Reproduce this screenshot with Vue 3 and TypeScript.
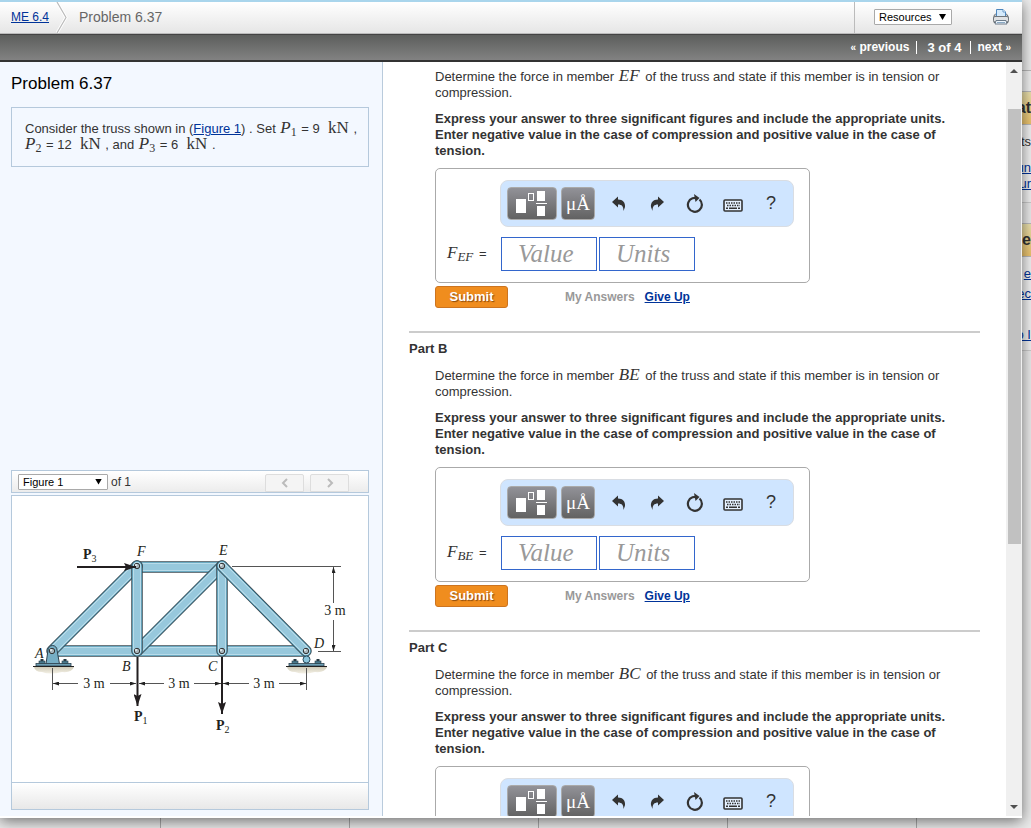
<script setup lang="ts">
import { ref } from 'vue'

interface Part {
  id: string
  title: string
  member: string
}

interface Member {
  x1: number
  y1: number
  x2: number
  y2: number
  cap: 'butt' | 'round'
}

const parts: Part[] = [
  { id: 'a', title: '', member: 'EF' },
  { id: 'b', title: 'Part B', member: 'BE' },
  { id: 'c', title: 'Part C', member: 'BC' },
]

const members: Member[] = [
  { x1: 52, y1: 651, x2: 306, y2: 651, cap: 'butt' },
  { x1: 137, y1: 567, x2: 222, y2: 567, cap: 'butt' },
  { x1: 52, y1: 651, x2: 137, y2: 566, cap: 'round' },
  { x1: 137, y1: 651, x2: 222, y2: 566, cap: 'butt' },
  { x1: 137, y1: 566, x2: 137, y2: 651, cap: 'round' },
  { x1: 222, y1: 566, x2: 222, y2: 651, cap: 'round' },
  { x1: 222, y1: 566, x2: 306, y2: 651, cap: 'round' },
]

const joints = [
  [52, 651], [137, 651], [222, 651], [306, 651], [137, 566], [222, 566],
]

const figure = ref('Figure 1')
const resource = ref('Resources')
</script>

<template>
  <div class="desk">
    <div class="backdrop">
      <aside class="side">
        <div class="side-top"></div>
        <section class="card">
          <h4>at</h4>
          <p>ts</p>
          <a href="#">un</a>
          <a href="#">ur</a>
        </section>
        <section class="card second">
          <h4>e</h4>
          <a href="#" class="spaced">e</a>
          <a href="#" class="spaced">ec</a>
          <a href="#" class="last">o I</a>
        </section>
      </aside>
      <div class="columns"><i v-for="n in 5" :key="n"></i></div>
    </div>

    <div class="window">
      <header class="crumbs">
        <a href="#">ME 6.4</a>
        <svg class="chevron" width="12" height="31" viewBox="0 0 12 31" aria-hidden="true">
          <path d="M1 0 L10 15.5 L1 31" fill="none" stroke="#fff" stroke-width="3" />
          <path d="M1 0 L10 15.5 L1 31" fill="none" stroke="#bbb" stroke-width="1.2" />
        </svg>
        <span class="here">Problem 6.37</span>
        <div class="tools">
          <span class="pick resources">
            <select v-model="resource" aria-label="Resources"><option>Resources</option></select>
          </span>
          <button class="print" type="button" aria-label="Print">
            <svg width="18" height="18" viewBox="0 0 18 18">
              <path d="M2.5 7 L4 5.5 H14 L16 8 V14.5 H2 V8Z" fill="#c9ccd0" stroke="#666b70" />
              <path d="M4.5 9 V1.5 H11 L13.5 4 V9Z" fill="#d5eafb" stroke="#4d86bd" />
              <path d="M11 1.5 V4 H13.5" fill="#fff" stroke="#4d86bd" stroke-width=".8" />
              <rect x="1.5" y="8.5" width="15" height="5.5" rx="1.5" fill="#dfe1e3" stroke="#70757a" />
              <path d="M4 12.5 H14 L15 16 H3Z" fill="#eef6fd" stroke="#6c7b89" />
              <path d="M5 14.5 H13" stroke="#8aa9c5" />
            </svg>
          </button>
        </div>
      </header>

      <nav class="pager">
        <a href="#"><small>«</small> previous</a>
        <span>3 of 4</span>
        <a href="#">next <small>»</small></a>
      </nav>

      <main class="body">
        <div class="left">
          <h1>Problem 6.37</h1>
          <div class="statement">
            Consider the truss shown in (<a href="#">Figure 1</a>) . Set
            <span class="math"><i>P</i><sub>1</sub></span> = 9 &nbsp;<span class="math">kN</span> ,<br />
            <span class="math first"><i>P</i><sub>2</sub></span> = 12 &nbsp;<span class="math">kN</span> , and
            <span class="math"><i>P</i><sub>3</sub></span> = 6 &nbsp;<span class="math">kN</span> .
          </div>

          <div class="figure-bar">
            <span class="pick fig">
              <select id="figure" v-model="figure" aria-label="Figure"><option>Figure 1</option></select>
            </span>
            <label for="figure">of 1</label>
            <div class="arrows">
              <button type="button" aria-label="Previous figure">
                <svg width="8" height="10" viewBox="0 0 8 10"><path d="M6 1 L2 5 L6 9" fill="none" stroke="#bbb" stroke-width="2" /></svg>
              </button>
              <button type="button" aria-label="Next figure">
                <svg width="8" height="10" viewBox="0 0 8 10"><path d="M2 1 L6 5 L2 9" fill="none" stroke="#bbb" stroke-width="2" /></svg>
              </button>
            </div>
          </div>
          <div class="figure">
            <svg viewBox="12 496 356 286" role="img" aria-label="Truss diagram">
              <defs>
                <linearGradient id="ground" x1="0" y1="0" x2="0" y2="1">
                  <stop offset="0" stop-color="#d0cbb8" />
                  <stop offset="1" stop-color="#f4f1e6" />
                </linearGradient>
                <marker id="dim" viewBox="0 0 6 4" refX="6" refY="2" markerWidth="6" markerHeight="4" orient="auto-start-reverse" markerUnits="userSpaceOnUse">
                  <path d="M0 0 L6 2 L0 4Z" fill="#222" />
                </marker>
                <marker id="force" viewBox="0 0 12 8" refX="12" refY="4" markerWidth="12" markerHeight="8" orient="auto" markerUnits="userSpaceOnUse">
                  <path d="M0 0 L12 4 L0 8 L2 4Z" fill="#231f20" />
                </marker>
              </defs>

              <path d="M34 667 H74 Q72 673 62 672 Q50 675 42 672 Q35 672 34 667Z" fill="url(#ground)" />
              <path d="M287 667 H327 Q325 673 315 672 Q303 675 295 672 Q288 672 287 667Z" fill="url(#ground)" />

              <g v-for="(m, i) in members" :key="i" :stroke-linecap="m.cap">
                <line :x1="m.x1" :y1="m.y1" :x2="m.x2" :y2="m.y2" stroke="#3b4a52" stroke-width="11.5" />
                <line :x1="m.x1" :y1="m.y1" :x2="m.x2" :y2="m.y2" stroke="#4b96b2" stroke-width="9.8" />
                <line :x1="m.x1" :y1="m.y1" :x2="m.x2" :y2="m.y2" stroke="#c3e2ee" stroke-width="8.4" />
                <line :x1="m.x1" :y1="m.y1" :x2="m.x2" :y2="m.y2" stroke="#97c8dc" stroke-width="6.4" />
              </g>

              <path d="M46 664 L48 650 A4.5 4.5 0 0 1 57 650 L59.5 664Z" fill="#76aec5" stroke="#2e4350" />
              <circle cx="306.5" cy="659.5" r="3.5" fill="#8cc6dd" stroke="#284a5b" />
              <g v-for="x in [54, 307]" :key="x">
                <rect :x="x - 18" y="663.5" width="35" height="2.5" fill="#6d9fb4" stroke="#2e4350" stroke-width=".8" />
                <path :d="`M${x - 21} 666.5 h41`" stroke="#222" stroke-width="1.2" />
                <rect :x="x - 15" y="661" width="6" height="2.5" fill="#48798d" stroke="#263a44" stroke-width=".6" />
                <rect :x="x + 8" y="661" width="6" height="2.5" fill="#48798d" stroke="#263a44" stroke-width=".6" />
                <path :d="`M${x - 12} 659 v2 M${x + 11} 659 v2`" stroke="#263a44" stroke-width="3" />
              </g>

              <g v-for="(j, i) in joints" :key="i">
                <circle :cx="j[0]" :cy="j[1]" r="2.7" fill="#a7b5bb" stroke="#333" />
                <circle :cx="j[0] - 1" :cy="j[1] - 1" r="1" fill="#eef3f5" />
              </g>

              <g stroke="#231f20" stroke-width="2">
                <line class="load" x1="77" y1="567" x2="136" y2="567" />
                <line class="load" x1="137.5" y1="657" x2="137.5" y2="706" />
                <line class="load" x1="222" y1="657" x2="222" y2="714" />
              </g>

              <g stroke="#555" stroke-width="1">
                <path d="M52.5 668 V690 M306.5 668 V690 M232 566.5 H341 M318 651.5 H341" />
                <line class="from" x1="53" y1="683.5" x2="78" y2="683.5" />
                <line class="to" x1="110" y1="683.5" x2="136" y2="683.5" />
                <line class="from" x1="139" y1="683.5" x2="164" y2="683.5" />
                <line class="to" x1="194" y1="683.5" x2="221" y2="683.5" />
                <line class="from" x1="223" y1="683.5" x2="249" y2="683.5" />
                <line class="to" x1="279" y1="683.5" x2="306" y2="683.5" />
                <line class="from" x1="333.5" y1="567" x2="333.5" y2="603" />
                <line class="to" x1="333.5" y1="620" x2="333.5" y2="651" />
              </g>

              <g class="letters">
                <text x="35" y="658">A</text><text x="122" y="671">B</text>
                <text x="208" y="671">C</text><text x="314" y="648">D</text>
                <text x="219" y="555">E</text><text x="137" y="556">F</text>
              </g>
              <g class="dims">
                <text x="94" y="688">3 m</text><text x="179" y="688">3 m</text>
                <text x="264" y="688">3 m</text><text x="335" y="615">3 m</text>
              </g>
              <g class="loads">
                <text x="83" y="559">P<tspan dy="3">3</tspan></text>
                <text x="134" y="721">P<tspan dy="3">1</tspan></text>
                <text x="216" y="730">P<tspan dy="3">2</tspan></text>
              </g>
            </svg>
            <div class="figure-foot"></div>
          </div>
        </div>

        <div class="right">
          <section v-for="part in parts" :key="part.id" class="part">
            <h2 v-if="part.title">{{ part.title }}</h2>
            <div class="question">
              <p>Determine the force in member <i class="math">{{ part.member }}</i> of the truss and state if this member is in tension or<br />compression.</p>
              <p class="strong">Express your answer to three significant figures and include the appropriate units.<br />Enter negative value in the case of compression and positive value in the case of<br />tension.</p>
              <form class="answer" @submit.prevent>
                <div class="toolbar">
                  <button class="key templates" type="button" aria-label="Templates">
                    <svg width="32" height="28" viewBox="0 0 32 28">
                      <path d="M0 9 h10 v14 h-10z M21 1 h8 v10 h-8z M21 16 h8 v10 h-8z M20 13 h11 v1 h-11z" fill="#fff" />
                      <rect x="12.5" y="3.5" width="5" height="7" fill="none" stroke="#fff" />
                    </svg>
                  </button>
                  <button class="key units" type="button">μÅ</button>
                  <button class="tool" type="button" aria-label="Undo">
                    <svg width="16" height="16" viewBox="0 0 16 16"><path d="M1 6 L7 .5 V3.5 C12 3.5 14.5 7 14 11 L12.5 15 C12.5 10.5 11 8.5 7 8.5 V11.5Z" fill="#333" /></svg>
                  </button>
                  <button class="tool" type="button" aria-label="Redo">
                    <svg width="16" height="16" viewBox="0 0 16 16"><path d="M15 6 L9 .5 V3.5 C4 3.5 1.5 7 2 11 L3.5 15 C3.5 10.5 5 8.5 9 8.5 V11.5Z" fill="#333" /></svg>
                  </button>
                  <button class="tool" type="button" aria-label="Reset">
                    <svg width="18" height="20" viewBox="0 0 18 20"><path d="M13.5 5.5 A7 7 0 1 1 6.5 4.2 L9.5 3.8" fill="none" stroke="#333" stroke-width="2.2" /><path d="M8 0 L13.5 4 L9.5 8Z" fill="#333" /></svg>
                  </button>
                  <button class="tool" type="button" aria-label="Keyboard">
                    <svg class="keys" width="20" height="13" viewBox="0 0 20 13">
                      <rect x="1" y="1" width="18" height="11" rx="1" fill="#e4f0ff" stroke="#333" stroke-width="1.6" />
                      <path d="M3 4 H17 M4 6.5 H17" stroke="#333" stroke-width="1.5" stroke-dasharray="1.5 1" />
                      <path d="M3 9.3 H5 M6 9.3 H14 M15 9.3 H17" stroke="#333" stroke-width="1.5" />
                    </svg>
                  </button>
                  <button class="tool help" type="button">?</button>
                </div>
                <div class="entry">
                  <label :for="'value-' + part.id"><i class="math">F<sub>{{ part.member }}</sub></i> =</label>
                  <input :id="'value-' + part.id" type="text" placeholder="Value" />
                  <input type="text" placeholder="Units" :aria-label="part.member + ' units'" />
                </div>
              </form>
              <div class="actions">
                <button class="submit" type="button">Submit</button>
                <span>My Answers</span>
                <a href="#">Give Up</a>
              </div>
            </div>
          </section>
        </div>

        <div class="scroll" aria-hidden="true">
          <svg width="8" height="4" viewBox="0 0 8 4"><path d="M0 4 L4 0 L8 4Z" fill="#505050" /></svg>
          <div class="track"><div class="thumb"></div></div>
          <svg width="8" height="4" viewBox="0 0 8 4"><path d="M0 0 L4 4 L8 0Z" fill="#505050" /></svg>
        </div>
      </main>
    </div>
  </div>
</template>

<style>
html, body { margin: 0; overflow: hidden; }
</style>

<style scoped>
.desk, .desk * { box-sizing: border-box; }
.desk { position: relative; height: 100vh; overflow: hidden; font: 13px/16px "Liberation Sans", Arial, sans-serif; color: #333; }
a { color: #039; text-decoration: underline; }
button, select, input { font-family: inherit; margin: 0; }
h1, h2, h4, p { margin: 0; }

.backdrop { display: flex; flex-direction: column; height: 100%; background: #ebebeb; }
.side { flex: 1; align-self: flex-end; width: 32px; text-align: right; white-space: nowrap; }
.side-top { height: 91px; background: linear-gradient(#eee 0 70px, #bbb 70px 71px, #f2f2f2 71px); }
.card { height: 112px; border-top: 1px solid #bbb; border-bottom: 1px solid #ccc; background: #f2f2f2; }
.card h4 { height: 33px; margin-bottom: 9px; border-bottom: 1px solid #bbb; font-size: 16px; line-height: 32px; background: linear-gradient(#ece2ae, #edc46c); }
.card p { margin-bottom: 10px; }
.card a { display: block; }
.card.second { height: 128px; margin-top: 20px; }
.card .spaced { margin-bottom: 4px; }
.card .last { margin-top: 25px; }
.columns { display: flex; height: 20px; }
.columns i { width: 189px; border-right: 1px solid #aaa; }
.columns i:first-child { width: 161px; }

.window { position: absolute; inset: 0 9px 10px 0; display: flex; flex-direction: column; padding-bottom: 2px; border-top: 2px solid #a9d5ec; background: #fff; box-shadow: 0 3px 14px rgba(0, 0, 0, .55); }
.crumbs { display: flex; align-items: center; height: 32px; padding: 0 0 1px 11px; border-bottom: 1px solid #bbb; background: linear-gradient(#fff, #e6e6e6); font-size: 12px; }
.chevron { margin: 0 11px 0 7px; }
.here { font-size: 14px; color: #666; }
.tools { display: flex; align-items: center; gap: 40px; height: 31px; margin-left: auto; padding: 0 12px 0 19px; border-left: 1px solid #bbb; }
.print { display: flex; padding: 0; border: 0; background: none; }
.pick { position: relative; display: flex; }
.pick::after { content: ""; position: absolute; right: 6px; top: 5px; width: 7px; height: 6px; background: #000; clip-path: polygon(0 0, 100% 0, 50% 100%); pointer-events: none; }
.pick select { width: 100%; height: 16px; padding: 0 4px; border: 1px solid #a9a9a9; border-radius: 1px; background: #fff; color: #000; font-size: 11px; line-height: 14px; appearance: none; }
.resources { width: 78px; }
.fig { width: 90px; }

.pager { display: flex; align-items: center; justify-content: flex-end; height: 28px; padding-right: 11px; border-top: 1px solid #444; border-bottom: 2px solid #333; background: linear-gradient(#5c5e5c, #828282); font-size: 12px; font-weight: bold; color: #fff; }
.pager a { color: #fff; text-decoration: none; }
.pager span { margin: 0 6px 0 7px; padding: 0 9px 0 10px; border: solid #fff; border-width: 0 1px; font-size: 13px; line-height: 13px; }
.pager small { font-size: 10px; }

.body { flex: 1; min-height: 0; display: grid; grid-template-columns: 383px 1fr 16px; overflow: hidden; }
.left { display: flex; flex-direction: column; padding: 13px 13px 6px 11px; border-right: 1px solid #b9cbdc; background: #f3f8ff; }
h1 { font-size: 17px; font-weight: normal; line-height: 18px; color: #000; }
.statement { height: 60px; margin-top: 14px; padding: 13px 0 0 13px; border: 1px solid #b5c9dc; white-space: nowrap; }
.math { margin: 0 1px; font-family: "Liberation Serif", "Times New Roman", serif; font-size: 17px; line-height: 1px; }
.math.first { margin-left: 0; }
.math sub { font-size: 12px; line-height: 1px; vertical-align: -3px; }
.figure-bar { display: flex; align-items: center; height: 23px; margin-top: auto; padding: 0 19px 0 6px; border: 1px solid #b5c9dc; background: linear-gradient(#fff, #ececec); font-size: 12px; }
.figure-bar label { margin-left: 3px; }
.arrows { display: flex; align-self: flex-end; gap: 6px; margin-left: auto; }
.arrows button { display: flex; align-items: center; justify-content: center; width: 39px; height: 18px; padding: 0; border: 1px solid #ddd; border-radius: 2px 2px 0 0; background: #f4f4f4; }
.figure { margin-top: 2px; border: 1px solid #b5c9dc; background: #fff; }
.figure svg { display: block; width: 100%; }
.figure-foot { height: 27px; border-top: 1px solid #b5c9dc; background: linear-gradient(#fff, #e8e8e8); }
.from { marker-start: url(#dim); }
.to { marker-end: url(#dim); }
.load { marker-end: url(#force); }
.letters, .dims, .loads { font-family: "Liberation Serif", serif; font-size: 14px; fill: #231f20; }
.letters { font-style: italic; }
.dims { text-anchor: middle; }
.loads { font-weight: bold; }
.loads tspan { font-size: 10px; font-weight: normal; }

.right { min-height: 0; overflow: hidden; padding: 7px 26px 0; }
.part + .part { margin-top: 23px; padding-top: 8px; border-top: 2px solid #ccc; }
h2 { margin-bottom: 11px; font-size: 13px; line-height: 16px; }
.question { padding-left: 26px; white-space: nowrap; }
.question p { height: 32px; margin-bottom: 10px; }
.question .strong { height: 48px; margin-bottom: 9px; font-weight: bold; }
.question p .math { margin: 0 2px 0 1px; }
.answer { width: 375px; height: 115px; padding: 11px 15px 0 11px; border: 1px solid #aaa; border-radius: 5px; }
.toolbar { display: flex; align-items: center; height: 47px; margin-left: 53px; padding-left: 6px; border: 1px solid #d9dde3; border-radius: 8px; background: #cfe5ff; }
.key { display: flex; align-items: center; justify-content: center; height: 33px; padding: 0; border: 1px solid #aaa; border-radius: 4px; background: linear-gradient(#929298, #626262); color: #fff; }
.templates { width: 50px; margin-right: 4px; }
.units { width: 34px; margin-right: 5px; font: 19px/32px "Liberation Serif", serif; }
.tool { display: flex; align-items: center; justify-content: center; width: 38px; height: 32px; padding: 0; border: 0; background: none; color: #333; }
.keys { margin-top: 4px; }
.help { font-size: 18px; }
.entry { display: flex; align-items: center; gap: 2px; margin-top: 10px; }
.entry label { width: 52px; }
.entry .math { margin: 0 2px 0 0; }
.entry .math sub { font-size: 13px; }
.entry input { width: 96px; height: 34px; padding: 0 8px 0 16px; border: 1px solid #36c; outline: 0; background: #fff; font: italic 25px/32px "Liberation Serif", serif; color: #333; }
.entry input::placeholder { color: #999; opacity: 1; }
.actions { display: flex; align-items: center; margin-top: 3px; font-size: 12px; font-weight: bold; }
.actions span { margin: 0 10px 0 57px; color: #999; }
.submit { width: 73px; height: 22px; padding: 0 0 2px; border: 1px solid #cc7420; border-radius: 3px; background: #f08d1e; color: #fff; font-size: 13px; font-weight: bold; text-shadow: 1px 1px 1px #8a4a0c; }

.scroll { display: flex; flex-direction: column; align-items: center; gap: 6px; padding: 7px 1px 7px 0; background: #f0f0f0; }
.track { flex: 1; align-self: stretch; padding: 30px 0 0 2px; }
.thumb { height: 63%; background: #c1c1c1; }
</style>
